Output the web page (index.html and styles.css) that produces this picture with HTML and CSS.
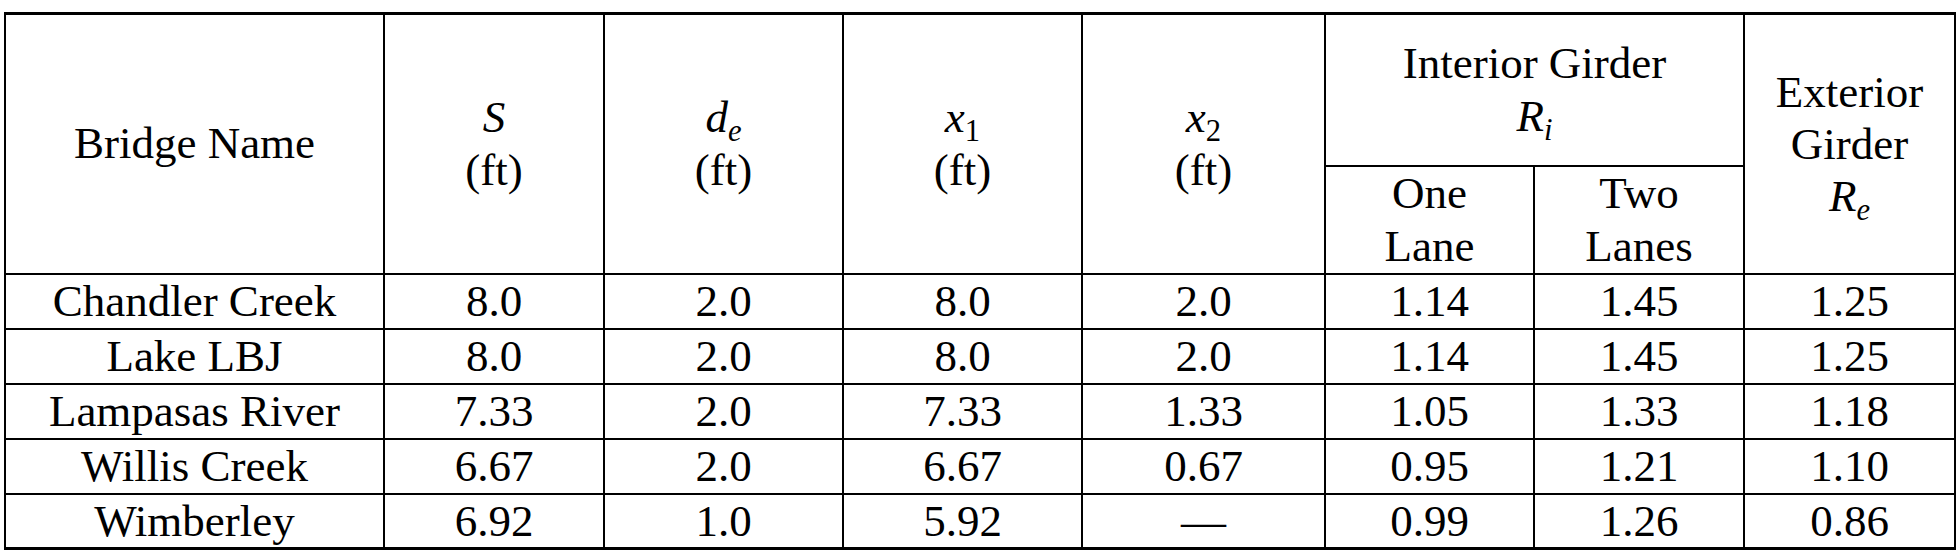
FILE: index.html
```html
<!DOCTYPE html>
<html>
<head>
    <title>Girder Distribution Factors</title>
    <meta name="viewport" content="width=device-width, initial-scale=1.0">
    <link rel="stylesheet" href="styles.css">
</head>
<body>
    <table class="factors">
        <colgroup>
            <col class="col-name">
            <col class="col-s">
            <col class="col-de">
            <col class="col-x1">
            <col class="col-x2">
            <col class="col-one">
            <col class="col-two">
            <col class="col-ext">
        </colgroup>
        <thead>
            <tr class="head-top">
                <th rowspan="2">Bridge Name</th>
                <th rowspan="2"><i>S</i><br>(ft)</th>
                <th rowspan="2"><i>d</i><sub><i>e</i></sub><br>(ft)</th>
                <th rowspan="2"><i>x</i><sub>1</sub><br>(ft)</th>
                <th rowspan="2"><i>x</i><sub>2</sub><br>(ft)</th>
                <th colspan="2">Interior Girder<br><i>R</i><sub><i>i</i></sub></th>
                <th rowspan="2" class="ext">Exterior<br>Girder<br><i>R</i><sub><i>e</i></sub></th>
            </tr>
            <tr class="head-sub">
                <th>One<br>Lane</th>
                <th>Two<br>Lanes</th>
            </tr>
        </thead>
        <tbody>
            <tr>
                <td>Chandler Creek</td>
                <td>8.0</td>
                <td>2.0</td>
                <td>8.0</td>
                <td>2.0</td>
                <td>1.14</td>
                <td>1.45</td>
                <td>1.25</td>
            </tr>
            <tr>
                <td>Lake LBJ</td>
                <td>8.0</td>
                <td>2.0</td>
                <td>8.0</td>
                <td>2.0</td>
                <td>1.14</td>
                <td>1.45</td>
                <td>1.25</td>
            </tr>
            <tr>
                <td>Lampasas River</td>
                <td>7.33</td>
                <td>2.0</td>
                <td>7.33</td>
                <td>1.33</td>
                <td>1.05</td>
                <td>1.33</td>
                <td>1.18</td>
            </tr>
            <tr>
                <td>Willis Creek</td>
                <td>6.67</td>
                <td>2.0</td>
                <td>6.67</td>
                <td>0.67</td>
                <td>0.95</td>
                <td>1.21</td>
                <td>1.10</td>
            </tr>
            <tr>
                <td>Wimberley</td>
                <td>6.92</td>
                <td>1.0</td>
                <td>5.92</td>
                <td>—</td>
                <td>0.99</td>
                <td>1.26</td>
                <td>0.86</td>
            </tr>
        </tbody>
    </table>
</body>
</html>
```

FILE: styles.css
```css
body {
    margin: 0;
    background-color: #fff;
    color: #000;
    font-family: "Liberation Serif", "Times New Roman", serif;
}

.factors {
    table-layout: fixed;
    border-collapse: collapse;
    width: 1950px;
    margin: 12px 0 0 4px;
    font-size: 45px;
    border-top: 3px solid #000;
    border-bottom: 3px solid #000;
}

.col-name { width: 379px; }
.col-s { width: 220px; }
.col-de { width: 239px; }
.col-x1 { width: 239px; }
.col-x2 { width: 243px; }
.col-one { width: 209px; }
.col-two { width: 210px; }
.col-ext { width: 211px; }

.factors th,
.factors td {
    border: 2px solid #000;
    padding: 0;
    text-align: center;
    vertical-align: middle;
    font-weight: normal;
    line-height: 53px;
}

.factors .head-top { height: 152px; }
.factors .head-sub { height: 108px; }

.factors .ext {
    line-height: 52px;
}

.factors tbody tr { height: 55px; }

.factors td {
    line-height: 50px;
}

.factors sub {
    font-size: 0.68em;
    line-height: 0;
    vertical-align: -0.28em;
}
```
